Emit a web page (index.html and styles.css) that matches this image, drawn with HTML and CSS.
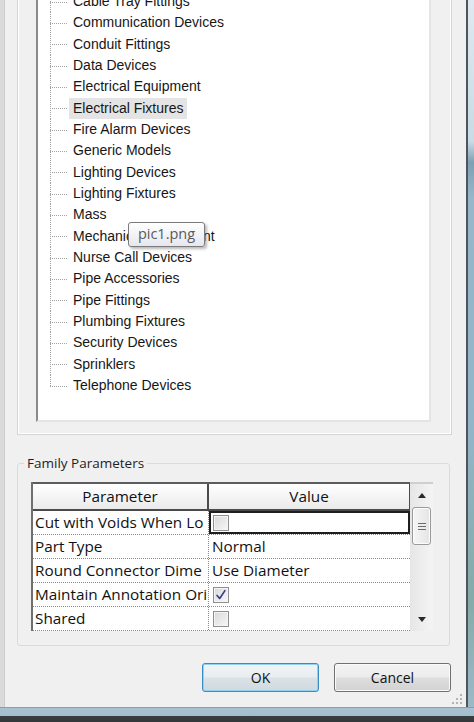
FILE: index.html
```html
<!DOCTYPE html>
<html>
<head>
<meta charset="utf-8">
<title>Family Parameters</title>
<link rel="stylesheet" href="styles.css">
</head>
<body>
<div class="screen">
  <div class="main">
    <div class="left-edge"></div>
    <div class="dialog">
      <div class="tree-group">
        <div class="tree">
          <ul class="tree-list">
            <li><span class="label">Cable Tray Fittings</span></li>
            <li><span class="label">Communication Devices</span></li>
            <li><span class="label">Conduit Fittings</span></li>
            <li><span class="label">Data Devices</span></li>
            <li><span class="label">Electrical Equipment</span></li>
            <li class="selected"><span class="label">Electrical Fixtures</span></li>
            <li><span class="label">Fire Alarm Devices</span></li>
            <li><span class="label">Generic Models</span></li>
            <li><span class="label">Lighting Devices</span></li>
            <li><span class="label">Lighting Fixtures</span></li>
            <li><span class="label">Mass</span></li>
            <li><span class="label">Mechanical Equipment</span></li>
            <li><span class="label">Nurse Call Devices</span></li>
            <li><span class="label">Pipe Accessories</span></li>
            <li><span class="label">Pipe Fittings</span></li>
            <li><span class="label">Plumbing Fixtures</span></li>
            <li><span class="label">Security Devices</span></li>
            <li><span class="label">Sprinklers</span></li>
            <li><span class="label">Telephone Devices</span></li>
          </ul>
          <div class="tooltip">pic1.png</div>
        </div>
      </div>

      <fieldset class="params">
        <legend>Family Parameters</legend>
        <div class="grid-wrap">
          <div class="table">
            <div class="hdr"><div class="c1">Parameter</div><div class="c2">Value</div></div>
            <div class="row"><div class="c1">Cut with Voids When Lo</div><div class="c2 focus"><span class="cb"></span></div></div>
            <div class="row"><div class="c1">Part Type</div><div class="c2">Normal</div></div>
            <div class="row"><div class="c1">Round Connector Dime</div><div class="c2">Use Diameter</div></div>
            <div class="row"><div class="c1">Maintain Annotation Ori</div><div class="c2"><span class="cb"><svg viewBox="0 0 16 16" width="14" height="14"><path d="M3.5 8.5 L6.5 12 L12.5 3" fill="none" stroke="#2b3a8c" stroke-width="1.8" stroke-linecap="round" stroke-linejoin="round"/></svg></span></div></div>
            <div class="row"><div class="c1">Shared</div><div class="c2"><span class="cb"></span></div></div>
          </div>
          <div class="vscroll">
            <div class="arrow"><svg viewBox="0 0 8 5" width="8" height="5"><path d="M0 5 L4 0 L8 5 Z" fill="#2a2a2a"/></svg></div>
            <div class="thumb"><svg viewBox="0 0 8 9" width="8" height="9"><path d="M0 1.5 H8 M0 4.5 H8 M0 7.5 H8" stroke="#6b6b6b" stroke-width="1"/></svg></div>
            <div class="track"></div>
            <div class="arrow"><svg viewBox="0 0 8 5" width="8" height="5"><path d="M0 0 L4 5 L8 0 Z" fill="#2a2a2a"/></svg></div>
          </div>
        </div>
      </fieldset>

      <div class="buttons">
        <button class="btn ok">OK</button>
        <button class="btn">Cancel</button>
      </div>
      <svg class="grip" viewBox="0 0 10 10" width="10" height="10">
        <g fill="#b4b4b4">
          <rect x="8" y="0" width="2" height="2"/>
          <rect x="4" y="4" width="2" height="2"/><rect x="8" y="4" width="2" height="2"/>
          <rect x="0" y="8" width="2" height="2"/><rect x="4" y="8" width="2" height="2"/><rect x="8" y="8" width="2" height="2"/>
        </g>
      </svg>
    </div>
    <div class="right-frame"></div>
  </div>
  <div class="bottom-frame"></div>
</div>
</body>
</html>
```
FILE: styles.css
```css
* { box-sizing: border-box; }
html, body { margin: 0; padding: 0; }
body {
  width: 474px;
  height: 722px;
  overflow: hidden;
  background: #f0f0f0;
  font-family: "Liberation Sans", Arial, sans-serif;
}
.screen {
  display: flex;
  flex-direction: column;
  width: 474px;
  height: 722px;
}
.main {
  display: flex;
  height: 707px;
}
.left-edge {
  width: 5px;
  background: #dadada;
  border-right: 1px solid #cdcdcd;
}
.dialog {
  flex: 1;
  position: relative;
  display: flex;
  flex-direction: column;
  background: #f0f0f0;
  padding: 0 14px 0 12px;
}

/* tree group */
.tree-group {
  height: 435px;
  flex: none;
  border: 1px solid #d5d5d5;
  border-top: none;
  box-shadow: inset 1px 0 #fff, inset -1px 0 #fff, inset 0 -1px #fff;
  padding: 0 20px 12px 18px;
}
.tree {
  position: relative;
  height: 100%;
  background: #fff;
  border-left: 2px solid #8a8a8a;
  border-right: 2px solid #e4e4e4;
  border-bottom: 2px solid #e4e4e4;
  overflow: hidden;
}
.tree-list {
  list-style: none;
  margin: -9px 0 0 0;
  padding: 0;
}
.tree-list li {
  position: relative;
  height: 21.33px;
  line-height: 21.33px;
  padding-left: 31px;
  font-size: 14px;
  color: #161616;
  white-space: nowrap;
}
.tree-list li::before {
  content: "";
  position: absolute;
  left: 12px;
  top: 50%;
  width: 18px;
  height: 1px;
  background: repeating-linear-gradient(90deg, #a2a2a2 0 1px, transparent 1px 2px);
}
.tree-list li::after {
  content: "";
  position: absolute;
  left: 12px;
  top: 0;
  bottom: 0;
  width: 1px;
  background: repeating-linear-gradient(180deg, #a2a2a2 0 1px, transparent 1px 2px);
}
.tree-list li:last-child::after { bottom: 50%; }
.label {
  display: inline-block;
  height: 21px;
  line-height: 21px;
  padding: 0 4px;
}
.selected .label { background: #e4e4e4; }

.tooltip {
  position: absolute;
  left: 90px;
  top: 222px;
  width: 77px;
  height: 25px;
  border: 1px solid #7a7a7a;
  border-radius: 3px;
  background: linear-gradient(#ffffff, #e6e7ef);
  box-shadow: 2px 2px 3px rgba(0, 0, 0, 0.28);
  font-family: "Open Sans", sans-serif;
  font-size: 14.5px;
  line-height: 22px;
  color: #5a5a5a;
  text-align: center;
}

/* parameters group */
.params {
  flex: none;
  margin: 20px 2px 0 0;
  border: 1px solid #d5dce2;
  border-radius: 3px;
  padding: 11px 16px 14px 13px;
  min-width: 0;
}
.params legend {
  font-family: "Open Sans", sans-serif;
  font-size: 13.5px;
  line-height: 16px;
  padding: 0 3px;
  margin-left: -7px;
  color: #1e1e1e;
}
.grid-wrap {
  display: flex;
  height: 149px;
}
.table {
  width: 379px;
  border-left: 2px solid #6f6f6f;
  font-family: "Open Sans", sans-serif;
  font-size: 15.3px;
  color: #111;
}
.hdr, .row {
  display: grid;
  grid-template-columns: 176px 201px;
}
.hdr {
  height: 29px;
  border-top: 2px solid #5c5c5c;
  border-bottom: 2px solid #4a4a4a;
  background: linear-gradient(#ffffff, #f3f3f3 60%, #eaeaea);
}
.hdr > div {
  text-align: center;
  line-height: 24px;
}
.hdr .c1 { border-right: 2px solid #4a4a4a; }
.hdr .c2 { border-right: 1px solid #4a4a4a; }
.row {
  height: 24px;
  background: #fff;
  border-bottom: 1px dotted #8a8a8a;
}
.row > div {
  line-height: 23px;
  white-space: nowrap;
  overflow: hidden;
}
.row .c1 {
  border-right: 1px dotted #8a8a8a;
  padding-left: 2px;
}
.row .c2 {
  padding-left: 3px;
  display: flex;
  align-items: center;
}
.row .c2.focus {
  box-shadow: inset 0 0 0 2px #1e1e1e;
}
.cb {
  width: 16px;
  height: 16px;
  margin-left: 1px;
  border: 1px solid #8e8f8f;
  background: linear-gradient(135deg, #d9d9d9, #f7f7f7);
  box-shadow: inset 0 0 0 1px #f4f4f4;
  display: flex;
  align-items: center;
  justify-content: center;
}
.vscroll {
  width: 23px;
  display: flex;
  flex-direction: column;
  background: linear-gradient(90deg, #e6e6e6, #f4f4f4);
  border-top: 2px solid #cfcfcf;
}
.arrow {
  height: 23px;
  display: flex;
  align-items: center;
  justify-content: center;
  flex: none;
}
.thumb {
  flex: none;
  height: 38px;
  margin: 0 2px;
  border: 1px solid #9a9a9a;
  border-radius: 3px;
  background: linear-gradient(90deg, #f6f6f6, #e4e4e4);
  box-shadow: inset 0 0 0 1px #fdfdfd;
  display: flex;
  align-items: center;
  justify-content: center;
}
.track { flex: 1; }

/* buttons */
.buttons {
  display: flex;
  justify-content: flex-end;
  gap: 15px;
  margin: 17px 1px 0 0;
}
.btn {
  width: 117px;
  height: 29px;
  border: 1px solid #707070;
  border-radius: 3px;
  background: linear-gradient(#f3f3f3 0%, #ececec 48%, #dedede 52%, #d2d2d2 100%);
  box-shadow: inset 0 0 0 1px #fbfbfb;
  font-family: "Open Sans", sans-serif;
  font-size: 14px;
  color: #111;
  padding: 0;
}
.btn.ok {
  border-color: #3a8cc4;
  background: linear-gradient(#f1f4f6 0%, #e8edf0 48%, #dbe2e7 52%, #d0d9df 100%);
  box-shadow: inset 0 0 0 1px #8fd3f3;
}
.grip {
  position: absolute;
  right: 4px;
  bottom: 3px;
}

/* window frame */
.right-frame {
  width: 8px;
  border-left: 2px solid #4d565c;
  background: linear-gradient(180deg, #dfe9ef 0, #c9dbe5 20%, #7f9fb2 23%, #97b7c9 28%, #94b5c7 60%, #86aaa8 85%, #9cb9c6 100%);
}
.bottom-frame {
  height: 15px;
  border-top: 1px solid #8d9ca6;
  background: linear-gradient(180deg, #a8c2d1 0, #a2bdcc 8px, #3b3e41 8px, #34373a 100%);
}
```
